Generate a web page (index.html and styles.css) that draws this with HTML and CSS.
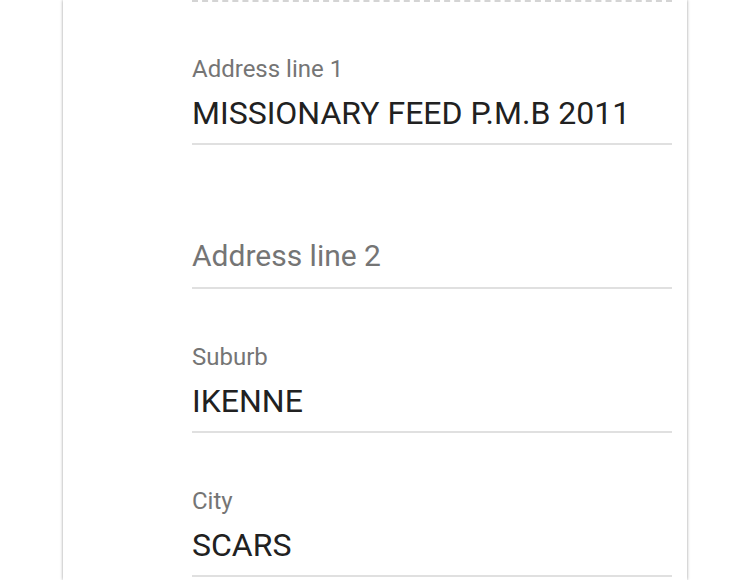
FILE: index.html
```html
<!DOCTYPE html>
<html>
<head>
<meta charset="utf-8">
<link rel="stylesheet" href="styles.css">
</head>
<body>
<div class="card">
  <div class="divider"></div>
  <div class="field first">
    <div class="label">Address line 1</div>
    <div class="value">MISSIONARY FEED P.M.B 2011</div>
  </div>
  <div class="field">
    <div class="value placeholder">Address line 2</div>
  </div>
  <div class="field">
    <div class="label">Suburb</div>
    <div class="value">IKENNE</div>
  </div>
  <div class="field">
    <div class="label">City</div>
    <div class="value">SCARS</div>
  </div>
</div>
</body>
</html>
```
FILE: styles.css
```css
html, body {
  margin: 0;
  padding: 0;
  background: #ffffff;
  overflow: hidden;
}
body {
  font-family: Roboto, "Noto Sans", sans-serif;
}
.card {
  margin-left: 63px;
  width: 624px;
  height: 580px;
  overflow: hidden;
  background: #fff;
  box-shadow: 0 0 3px rgba(0,0,0,0.4);
  padding: 0 15px 0 129px;
  box-sizing: border-box;
}
.divider {
  height: 0;
  border-top: 2px dashed #d4d4d4;
}
.field {
  height: 142px;
  flex-shrink: 0;
  border-bottom: 2px solid #e0e0e0;
  display: flex;
  flex-direction: column;
  justify-content: flex-end;
}
.field.first {
  height: 141px;
}
.label {
  font-size: 24px;
  line-height: 28px;
  color: #757575;
  margin-bottom: 12px;
}
.value {
  font-size: 32px;
  line-height: 36px;
  color: #212121;
  padding-bottom: 12px;
}
.value.placeholder {
  font-size: 30px;
  color: #757575;
  padding-bottom: 13px;
}
```
